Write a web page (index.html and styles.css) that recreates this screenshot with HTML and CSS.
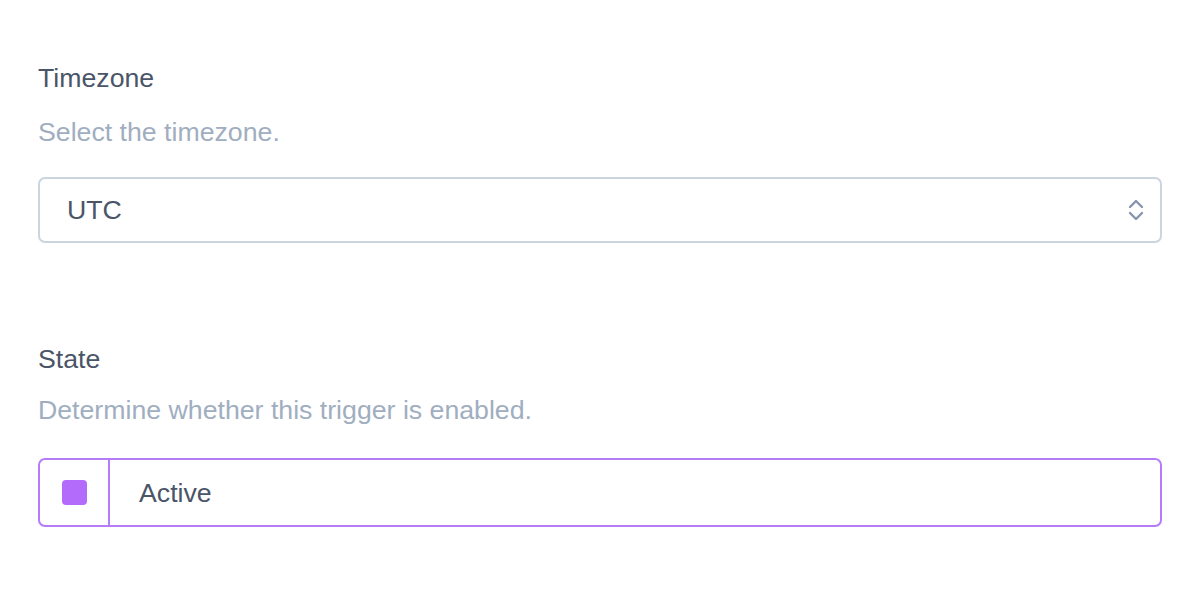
FILE: index.html
```html
<!DOCTYPE html>
<html lang="en">
<head>
<meta charset="utf-8">
<title>Trigger settings</title>
<link rel="stylesheet" href="styles.css">
</head>
<body>
<main class="form">
  <section class="field field-timezone">
    <h3 class="label">Timezone</h3>
    <p class="help">Select the timezone.</p>
    <div class="select">
      <span class="select-value">UTC</span>
      <svg class="select-icon" width="16" height="22" viewBox="0 0 16 22" aria-hidden="true">
        <path d="M2 8 L8 2 L14 8" fill="none" stroke="#8595ab" stroke-width="2.4" stroke-linecap="round" stroke-linejoin="round"/>
        <path d="M2 14 L8 20 L14 14" fill="none" stroke="#8595ab" stroke-width="2.4" stroke-linecap="round" stroke-linejoin="round"/>
      </svg>
    </div>
  </section>
  <section class="field field-state">
    <h3 class="label">State</h3>
    <p class="help">Determine whether this trigger is enabled.</p>
    <label class="toggle">
      <span class="toggle-box"><span class="checkbox"></span></span>
      <span class="toggle-text">Active</span>
    </label>
  </section>
</main>
</body>
</html>
```

FILE: styles.css
```css
* { box-sizing: border-box; }
html, body { margin: 0; padding: 0; background: #ffffff; }
body {
  font-family: "Liberation Sans", Arial, Helvetica, sans-serif;
  font-size: 26.7px;
  line-height: 30px;
  color: #4a5568;
}
.form {
  padding: 63px 38px 0 38px;
  display: flex;
  flex-direction: column;
}
.field { display: flex; flex-direction: column; }
.field-state { margin-top: 101px; }
.label {
  margin: 0;
  font-size: 26.7px;
  font-weight: normal;
  line-height: 30px;
  color: #4a5568;
}
.help {
  margin: 24px 0 0 0;
  font-size: 26.7px;
  line-height: 30px;
  color: #a0aec0;
}
.field-state .help { margin-top: 21px; }
.select {
  margin-top: 30px;
  height: 66px;
  border: 2px solid #cbd5e0;
  border-radius: 7px;
  display: flex;
  align-items: center;
  justify-content: space-between;
  padding: 0 16px 0 27px;
}
.select-value { color: #4a5568; }
.select-icon { display: block; }
.toggle {
  margin-top: 33px;
  height: 69px;
  border: 2px solid #b57cf7;
  border-radius: 7px;
  display: flex;
  align-items: stretch;
}
.toggle-box {
  width: 70px;
  border-right: 2px solid #b57cf7;
  display: flex;
  align-items: center;
  justify-content: center;
}
.checkbox {
  width: 25px;
  height: 25px;
  border-radius: 4px;
  background: #b36bfc;
}
.toggle-text {
  display: flex;
  align-items: center;
  padding-left: 29px;
  color: #4a5568;
}
```
